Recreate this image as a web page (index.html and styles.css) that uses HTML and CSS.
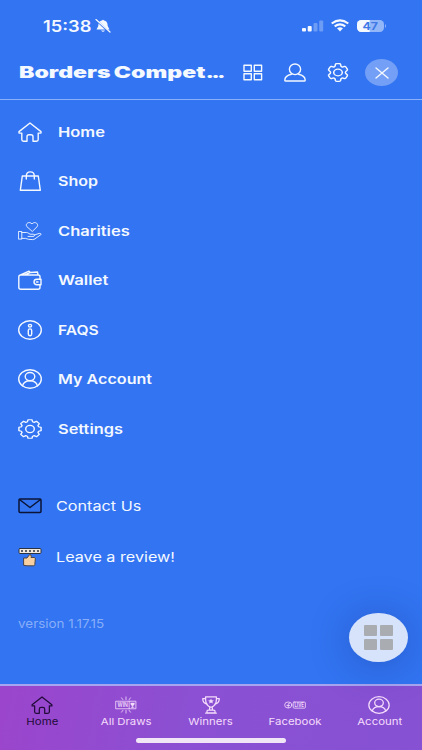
FILE: index.html
```html
<!DOCTYPE html>
<html lang="en">
<head>
<meta charset="utf-8">
<title>Borders Competitions</title>
<link rel="stylesheet" href="styles.css">
</head>
<body>
<svg class="defs" aria-hidden="true">
  <symbol id="home" viewBox="0 0 24 20"><path d="M12 1 1 9.600v1.500h2.800V17.500q0 1.700 1.700 1.700H9v-4.500q0-2 2-2h2q2 0 2 2v4.500h3.500q1.700 0 1.700-1.700V11.100H23V9.600Z"/></symbol>
  <symbol id="user" viewBox="0 0 24 20"><ellipse cx="12" cy="10" rx="11.300" ry="9.200"/><ellipse cx="12" cy="7.600" rx="4.800" ry="4.100"/><path d="M4.500 16.800C5.300 13.700 8.300 11.700 12 11.700s6.700 2 7.500 5.100"/></symbol>
</svg>
<main class="screen">
  <div class="status">
    <span class="time"><span class="wide">15:38</span></span>
    <svg class="bell" width="16" height="14" viewBox="0 0 16 14"><path class="solid" d="M7 1.500Q8 0 9 1.500C12 2 12.600 4.500 12.700 7L14.500 10.500H1.500L3.300 7C3.400 4.500 4 2 7 1.500ZM6 11.500h4Q8 14 6 11.500Z"/><path class="cut" d="M0 0 14 13"/><path class="slash" d="M1 .5 15 13"/></svg>
    <svg class="radio" width="84" height="14" viewBox="0 0 84 14">
      <g class="solid"><rect x="0" y="9" width="4" height="3.500" rx="1"/><rect x="5.700" y="7" width="4" height="5.500" rx="1"/><g opacity=".3"><rect x="11.500" y="4" width="4" height="8.500" rx="1"/><rect x="17.200" y="1.500" width="4" height="11" rx="1"/></g></g>
      <path class="wave" d="M29.700 4.500Q38 -1.800 46.300 4.500M32.700 7.400Q38 3.200 43.300 7.400"/><path class="solid" d="M35 9.300Q38 7.400 41 9.300L38 12.400Z"/>
      <rect class="solid" x="55" y="1" width="27" height="12" rx="4.200" opacity=".5"/><path class="solid" d="M59.200 1H67.700V13H59.200A4.200 4.200 0 0 1 55 8.800V5.200A4.200 4.200 0 0 1 59.200 1Z"/><path class="solid" d="M83 5q2 2 0 4Z" opacity=".5"/>
      <text class="charge" x="60.500" y="10.800" textLength="15.500" lengthAdjust="spacingAndGlyphs">47</text>
    </svg>
  </div>
  <header class="header">
    <h1 class="title"><span class="wide">Borders Compet<span class="dots">...</span></span></h1>
    <nav class="actions">
      <svg width="20" height="17" viewBox="0 0 20 17"><path d="M1 1.200h7.300v6H1ZM11.300 1.200h7.300v6h-7.300ZM1 9.800h7.300v6H1ZM11.300 9.800h7.300v6h-7.300Z"/></svg>
      <svg width="22" height="19" viewBox="0 0 22 19"><ellipse cx="11" cy="6.300" rx="5.600" ry="5.300"/><path d="M7.500 11.200C3.500 12 .8 13.500.8 17.200q0 .8 1 .8h18.400q1 0 1-.8c0-3.700-2.700-5.200-6.700-6"/></svg>
      <svg class="cog" width="22" height="19" viewBox="2 2.300 20 19.400" preserveAspectRatio="none"><path d="M9.594 3.940c.09-.542.56-.94 1.110-.94h2.593c.55 0 1.020.398 1.110.94l.213 1.281c.063.374.313.686.645.87.074.04.147.083.22.127.325.196.72.257 1.075.124l1.217-.456a1.125 1.125 0 0 1 1.370.49l1.296 2.247a1.125 1.125 0 0 1-.26 1.431l-1.003.827c-.293.241-.438.613-.43.992a7.723 7.723 0 0 1 0 .255c-.008.378.137.75.43.991l1.004.827c.424.35.534.955.26 1.430l-1.298 2.247a1.125 1.125 0 0 1-1.369.491l-1.217-.456c-.355-.133-.75-.072-1.076.124a6.470 6.470 0 0 1-.22.128c-.331.183-.581.495-.644.869l-.213 1.281c-.09.543-.56.94-1.110.94h-2.594c-.55 0-1.019-.398-1.110-.94l-.213-1.281c-.062-.374-.312-.686-.644-.87a6.520 6.520 0 0 1-.22-.127c-.325-.196-.72-.257-1.076-.124l-1.217.456a1.125 1.125 0 0 1-1.369-.49l-1.297-2.247a1.125 1.125 0 0 1 .26-1.431l1.004-.827c.292-.24.437-.613.43-.991a6.932 6.932 0 0 1 0-.255c.007-.38-.138-.751-.43-.992l-1.004-.827a1.125 1.125 0 0 1-.26-1.430l1.297-2.247a1.125 1.125 0 0 1 1.370-.491l1.216.456c.356.133.751.072 1.076-.124.072-.044.146-.086.22-.128.332-.183.582-.495.644-.869l.214-1.280Z"/><ellipse cx="12" cy="12" rx="3.900" ry="3.400"/></svg>
      <span class="close"><svg width="14" height="12" viewBox="0 0 14 12"><path d="M1 1 13 11M13 1 1 11"/></svg></span>
    </nav>
  </header>
  <ul class="menu">
    <li><svg class="icon"><use href="#home"/></svg><span class="wide l-home">Home</span></li>
    <li><svg class="icon" viewBox="0 0 24 20"><path d="M4.300 5H20.300L22.300 19.300H2.300ZM8.300 8V5Q8.300.9 12.300.9T16.300 5V8"/></svg><span class="wide l-shop">Shop</span></li>
    <li><svg class="icon thin" viewBox="0 0 24 20"><path d="M14 10.200 8.800 5.600C6.800 3.200 10.800-.4 14 2.900c3.200-3.300 7.200.3 5.200 2.700ZM.8 10.500h3v7.600h-3ZM3.800 11.500h4.500q1.500 0 2.700 1l1 .7h3.200q1.400.1 1.300 1.200T15 15.400H10M16.400 14l4.800-1.600q1.800-.2 2 1L17 17.800q-1 .8-2.500.8-4.500 0-7-1.200H3.800"/></svg><span class="wide l-char">Charities</span></li>
    <li><svg class="icon" viewBox="0 0 24 20"><path d="M22 9V6.800q0-1.800-1.800-1.800H2.700Q.8 5 .8 7v10.300q0 2 2 2H20q2 0 2-2V15M2.500 5 11 1.200l1.500 1.300L19.500 2l.6 3M6.500 5l5.500-2.400M23 9.300H19q-3 0-3 2.700t3 2.700h4ZM18.500 12h1.500"/></svg><span class="wide l-wall">Wallet</span></li>
    <li><svg class="icon" viewBox="0 0 24 20"><ellipse cx="12" cy="10" rx="11.300" ry="9.200"/><ellipse cx="12" cy="5.700" rx="1.600" ry="1.300"/><rect x="10.300" y="8.900" width="3.400" height="6.800" rx="1.600"/></svg><span class="wide l-faq">FAQS</span></li>
    <li><svg class="icon"><use href="#user"/></svg><span class="wide l-acc">My Account</span></li>
    <li><svg class="icon" viewBox="-12 -12 24 24" preserveAspectRatio="none"><path d="M-2.630-8.600-1.960-11.100H1.960L2.630-8.600 4.230-7.950 6.480-9.260 9.260-6.480 7.950-4.230 8.600-2.630 11.100-1.960V1.960L8.600 2.630 7.950 4.230 9.260 6.480 6.480 9.260 4.230 7.950 2.630 8.600 1.960 11.100H-1.960L-2.630 8.600-4.230 7.950-6.480 9.260-9.260 6.480-7.950 4.230-8.600 2.630-11.100 1.960V-1.960L-8.600-2.630-7.950-4.230-9.260-6.480-6.480-9.260-4.230-7.950Z"/><circle r="4.300"/></svg><span class="wide l-set">Settings</span></li>
  </ul>
  <ul class="links">
    <li><svg class="mail" width="24" height="16" viewBox="0 0 24 16"><rect x="1" y="1" width="22" height="13.500" rx="1.200"/><path d="M1.500 1.500 12 9.500 22.500 1.500"/></svg><span class="wide l-contact">Contact Us</span></li>
    <li><svg class="review" width="24" height="20" viewBox="0 0 24 20"><rect class="plate" x="1" y="1.500" width="22" height="5" rx="1"/><path class="stars" d="M3 4h18"/><path class="thumb" d="M6 11h3l2.500-3.300q2-.5 1.800 2L13 10.500h3.500q1 .2.800 1.500l-.5 5.800q-.3 1-1.300 1H9L6 18.300Z"/></svg><span class="wide l-review">Leave a review!</span></li>
  </ul>
  <p class="version"><span class="wide">version 1.17.15</span></p>
  <footer class="tabs">
    <div class="tab active"><svg class="tabicon"><use href="#home"/></svg><span class="wide">Home</span></div>
    <div class="tab"><svg class="tabicon thin" viewBox="0 0 24 20"><path d="M1 5.800h22v8.400H1ZM15.500 5.800v8.400M12 4V1M12 16v3M8.500 4 7 2M15.500 4 17 2M8.500 16 7 18M15.500 16 17 18M19.300 11v1.500M18 12.500h2.800"/><path class="solid" d="M17 7.500h4.600v1.200q0 2.300-2.300 2.300T17 8.700Z"/><text class="tiny" x="2.600" y="12.400" textLength="11.500" lengthAdjust="spacingAndGlyphs">WIN</text></svg><span class="wide">All Draws</span></div>
    <div class="tab"><svg class="tabicon" viewBox="0 0 24 20"><path d="M6 1h12v3q0 7-6 8.500Q6 11 6 4ZM6 3H2.800q0 5 5 6M18 3h3.200q0 5-5 6M10.500 12.500v3M13.500 12.500v3M7.500 18.800v-1.500q0-1.500 1.500-1.500h6q1.500 0 1.500 1.500v1.500ZM6 19h12"/><path class="solid" d="m12 3 1 1.800 2.200.2-1.700 1.300.6 2L12 7.300 9.900 8.300l.6-2L8.800 5l2.200-.2Z"/></svg><span class="wide">Winners</span></div>
    <div class="tab"><svg class="tabicon thin" viewBox="0 0 24 20"><ellipse cx="4.500" cy="10" rx="4" ry="3.400"/><path d="M4.500 13V9q0-1 1.400-1M3 10.500h3"/><rect x="10" y="6.700" width="13.500" height="6.800" rx="1"/><text class="tiny" x="11.500" y="12.100" textLength="10.500" lengthAdjust="spacingAndGlyphs">LIVE</text></svg><span class="wide">Facebook</span></div>
    <div class="tab"><svg class="tabicon"><use href="#user"/></svg><span class="wide">Account</span></div>
  </footer>
  <div class="fab"><i></i><i></i><i></i><i></i></div>
  <div class="indicator"></div>
</main>
</body>
</html>
```
FILE: styles.css
```css
* { box-sizing: border-box; }
body { margin: 0; font-family: Inter, "Liberation Sans", sans-serif; color: #f4f8ff; }
.defs { position: absolute; width: 0; height: 0; }
.screen { position: relative; width: 422px; height: 750px; overflow: hidden; background: #3274f2; display: flex; flex-direction: column; }
svg { display: block; flex: none; fill: none; stroke: currentColor; stroke-width: 1.4; stroke-linejoin: round; stroke-linecap: round; }
svg text { stroke: none; fill: currentColor; }
.solid { fill: currentColor; stroke: none; }
.wide { display: inline-block; white-space: nowrap; transform: scaleX(var(--sx, 1.2)); transform-origin: left center; }
ul { list-style: none; margin: 0; padding: 0; }

.status { height: 46px; padding: 6px 36px 0 43px; display: flex; align-items: center; }
.time { width: 52px; font-size: 15.5px; font-weight: 600; --sx: 1.18; }
.cut { stroke: #3274f2; stroke-width: 2; }
.slash { stroke-width: 1.2; }
.radio { margin-left: auto; }
.wave { stroke-width: 2.1; stroke-linecap: butt; }
.radio .charge { fill: #3f79e6; font-size: 10.5px; font-weight: 700; }

.header { height: 54px; padding: 0 24px 0 19px; border-bottom: 1.5px solid #8cb1f8; display: flex; align-items: center; justify-content: space-between; }
.title { margin: 0; width: 210px; font-size: 15.5px; font-weight: 900; word-spacing: -1px; --sx: 1.49; }
.dots { letter-spacing: -1.9px; }
.actions { display: flex; align-items: center; gap: 21px; }
.actions .close { margin-left: -5px; }
.close { width: 33px; height: 27px; border-radius: 50%; background: #739ff6; display: grid; place-items: center; }

.menu { padding-top: 7px; }
.menu li { height: 49.5px; padding-left: 18px; display: flex; align-items: center; gap: 16px; font-size: 13px; font-weight: 600; }
.icon { width: 24px; height: 20px; }
.thin { stroke-width: .9; }
.l-home { --sx: 1.27; }
.l-shop { --sx: 1.23; }
.l-char { --sx: 1.27; }
.l-wall { --sx: 1.29; }
.l-acc { --sx: 1.24; }
.l-set { --sx: 1.26; }

.links { padding-top: 27px; }
.links li { height: 51px; padding-left: 18px; display: flex; align-items: center; gap: 14px; font-size: 13px; }
.l-contact, .l-review { --sx: 1.245; }
.mail { color: #0b1435; stroke-width: 1.5; }
.plate { fill: #f2e8dc; stroke: #2c3340; stroke-width: 1; }
.stars { stroke: #2c3340; stroke-width: 1.6; stroke-dasharray: 2 2; stroke-linecap: butt; }
.thumb { fill: #f8cfa0; stroke: #4b4648; stroke-width: 1; }
.version { margin: 34px 0 0 18px; font-size: 12px; line-height: 14px; color: #88aef8; --sx: 1.12; }

.tabs { margin-top: auto; height: 66px; padding-top: 10px; border-top: 2px solid #a8a5f0; background: linear-gradient(100deg, #9b45cc, #8b50d3 45%, #8651d3); display: grid; grid-template-columns: repeat(5, 84.3px); }
.tab { display: flex; flex-direction: column; align-items: center; gap: 2px; font-size: 9.5px; line-height: 12px; color: #f5dcfb; }
.tab .wide { transform-origin: center; }
.active { color: #220b39; }
.tabicon { width: 22px; height: 18px; }
.tiny { font-size: 6.5px; font-weight: 600; }
.fab { position: absolute; left: 349px; top: 613px; width: 59px; height: 49px; border-radius: 50%; background: #d7e3fb; box-shadow: 0 3px 42px rgba(15, 35, 110, .33); display: grid; grid-template-columns: 13px 13px; grid-template-rows: 11px 11px; gap: 3px; place-content: center; }
.fab i { background: #a9adb2; border-radius: 1px; }
.indicator { position: absolute; left: 136px; top: 738px; width: 150px; height: 5px; border-radius: 3px; background: #f0e6f6; }
```
